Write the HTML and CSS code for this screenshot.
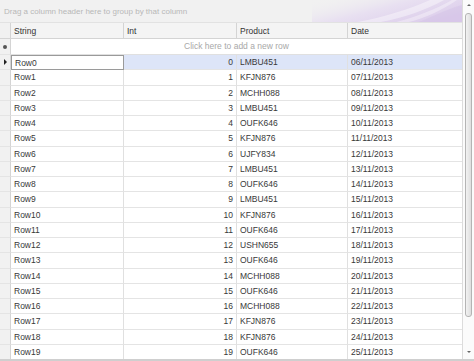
FILE: index.html
```html
<!DOCTYPE html>
<html lang="en">
  <head>
    <meta charset="UTF-8" />
    <title>Grid</title>
    <link rel="stylesheet" href="styles.css">
  </head>
  <body>
    <div class="window">
      <div class="grid">
        <!-- group panel -->
        <div class="group-panel">
          <span class="group-text">Drag a column header here to group by that column</span>
          <svg class="swirl" width="150" height="23" viewBox="0 0 150 23">
            <defs>
              <linearGradient id="lav" x1="0" y1="0" x2="1" y2="0.6">
                <stop offset="0" stop-color="#f1f1f1" stop-opacity="0" />
                <stop offset="0.5" stop-color="#e8e0f1" />
                <stop offset="1" stop-color="#dccdeb" />
              </linearGradient>
            </defs>
            <rect x="0" y="0" width="150" height="23" fill="url(#lav)" />
            <path d="M40 23 C70 18 95 10 118 0 L132 0 C110 12 85 20 62 23 Z" fill="#ffffff" opacity="0.4" />
            <path d="M80 23 C102 18 122 10 140 0 L145 0 C127 12 109 20 92 23 Z" fill="#ffffff" opacity="0.35" />
            <path d="M104 23 C120 17 135 9 150 5 L150 23 Z" fill="#d2c0e6" opacity="0.45" />
          </svg>
        </div>

        <!-- header -->
        <div class="row header">
          <div class="ind"></div>
          <div class="cell c-str">String</div>
          <div class="cell c-int">Int</div>
          <div class="cell c-prod">Product</div>
          <div class="cell c-date">Date</div>
        </div>

        <!-- new item row -->
        <div class="row new-row">
          <div class="ind"><span class="dot"></span></div>
          <div class="new-text">Click here to add a new row</div>
        </div>

        <div id="rows"></div>
      </div>

      <div class="vscroll">
        <span class="arrow up"></span>
        <div class="thumb"></div>
        <span class="arrow down"></span>
      </div>
    </div>
    <div class="bottom-line"></div>

    <script>
      // data rows
      var products = ["LMBU451", "KFJN876", "MCHH088", "LMBU451", "OUFK646",
        "KFJN876", "UJFY834", "LMBU451", "OUFK646", "LMBU451",
        "KFJN876", "OUFK646", "USHN655", "OUFK646", "MCHH088",
        "OUFK646", "MCHH088", "KFJN876", "KFJN876", "OUFK646"];

      var html = "";
      for (var i = 0; i < products.length; i++) {
        var day = String(6 + i).padStart(2, "0");
        html +=
          '<div class="row data' + (i === 0 ? " selected" : "") + '">' +
          '<div class="ind">' + (i === 0 ? '<span class="tri"></span>' : "") + "</div>" +
          '<div class="cell c-str">Row' + i + "</div>" +
          '<div class="cell c-int num">' + i + "</div>" +
          '<div class="cell c-prod">' + products[i] + "</div>" +
          '<div class="cell c-date">' + day + "/11/2013</div>" +
          "</div>";
      }
      document.getElementById("rows").innerHTML = html;
    </script>
  </body>
</html>
```

FILE: styles.css
```css
body {
  margin: 0;
  font-family: "Liberation Sans", Arial, sans-serif;
  font-size: 8.5px;
  color: #383838;
  background: #fff;
  overflow: hidden;
}

.window {
  display: flex;
  height: 359px;
  overflow: hidden;
}

.grid {
  width: 462px;
  border-right: 1px solid #dcdcdc;
  overflow: hidden;
}

.group-panel {
  position: relative;
  height: 23px;
  background: #f1f1f1;
  border-bottom: 1px solid #e2e2e2;
  box-sizing: border-box;
  display: flex;
  align-items: center;
  padding-left: 4px;
  overflow: hidden;
}

.group-text {
  color: #b8b8b8;
  font-size: 8px;
}

.swirl {
  position: absolute;
  right: 0;
  top: 0;
}

.row {
  display: flex;
  box-sizing: border-box;
}

.ind {
  width: 11px;
  flex: none;
  background: #f1f1f1;
  border-right: 1px solid #d4d4d4;
  border-bottom: 1px solid #e4e4e4;
  box-sizing: border-box;
  display: flex;
  align-items: center;
  justify-content: center;
}

.cell {
  box-sizing: border-box;
  padding: 0 3px;
  border-right: 1px solid #e0e0e0;
  border-bottom: 1px solid #e4e4e4;
  display: flex;
  align-items: center;
  white-space: nowrap;
}

.c-str { width: 113px; }
.c-int { width: 113px; }
.c-prod { width: 111px; }
.c-date { width: 114px; border-right: none; }

.num {
  justify-content: flex-end;
}

.header {
  height: 16px;
  background: #f4f4f4;
}

.header .cell {
  border-right-color: #d4d4d4;
  border-bottom-color: #d4d4d4;
  color: #333;
}

.header .ind {
  border-bottom-color: #d4d4d4;
}

.new-row {
  height: 16px;
}

.new-text {
  flex: 1;
  text-align: center;
  color: #a8a8a8;
  border-bottom: 1px solid #e0e0e0;
  line-height: 15px;
}

.dot {
  width: 4px;
  height: 4px;
  border-radius: 50%;
  background: #555;
}

.data {
  height: 15.26px;
}

.selected .cell {
  background: #dde5f8;
}

.selected .c-str {
  background: #fff;
  border: 1px solid #9a9a9a;
}

.tri {
  width: 0;
  height: 0;
  border-top: 3px solid transparent;
  border-bottom: 3px solid transparent;
  border-left: 3px solid #222;
}

.vscroll {
  width: 11px;
  flex: none;
  background: #fbfbfb;
  display: flex;
  flex-direction: column;
  align-items: center;
}

.arrow {
  width: 0;
  height: 0;
  border-left: 2px solid transparent;
  border-right: 2px solid transparent;
}

.arrow.up {
  margin-top: 4px;
  border-bottom: 2px solid #666;
}

.arrow.down {
  margin-top: auto;
  margin-bottom: 6px;
  border-top: 2px solid #666;
}

.thumb {
  margin-top: 7px;
  width: 5px;
  height: 302px;
  border: 1px solid #b4b4b4;
  border-radius: 3px;
  background: linear-gradient(to right, #f2f2f2, #dedede);
}

.bottom-line {
  height: 2px;
  background: #cfcfcf;
}
```
